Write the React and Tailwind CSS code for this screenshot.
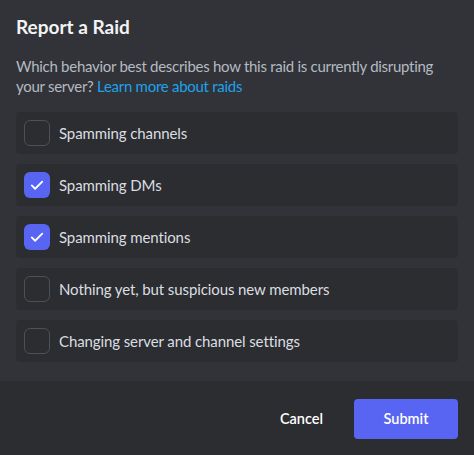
import React from "react";

const options = [
  { label: "Spamming channels", checked: false },
  { label: "Spamming DMs", checked: true },
  { label: "Spamming mentions", checked: true },
  { label: "Nothing yet, but suspicious new members", checked: false },
  { label: "Changing server and channel settings", checked: false },
];

function Check({ checked }) {
  if (checked) {
    return (
      <div className="w-[26px] h-[26px] rounded-[6px] bg-[#5865f2] flex items-center justify-center shrink-0">
        <svg width="18" height="18" viewBox="0 0 24 24" fill="none">
          <path d="M5 12.5l4.5 4.5L19 7.5" stroke="#ffffff" strokeWidth="2.4" strokeLinecap="round" strokeLinejoin="round" />
        </svg>
      </div>
    );
  }
  return <div className="w-[26px] h-[26px] rounded-[6px] border-[1.5px] border-[#4e5058] shrink-0" />;
}

export default function App() {
  return (
    <div className="w-[474px] h-[455px] bg-[#313338] flex flex-col" style={{ fontFamily: 'Lato, "Noto Sans", sans-serif' }}>
      <div className="px-4 pt-[12px] flex-1">
        <h1 className="text-[19px] font-bold text-[#f2f3f5] leading-[30px]">Report a Raid</h1>
        <p className="mt-[14px] text-[15px] leading-[20px] tracking-[-0.28px] text-[#b5bac1]">
          Which behavior best describes how this raid is currently disrupting your server?{" "}
          <span className="text-[#1ea2ec]">Learn more about raids</span>
        </p>
        <div className="mt-[16px] flex flex-col gap-[10px]">
          {options.map((o) => (
            <div key={o.label} className="h-[42px] rounded-[4px] bg-[#2b2d31] flex items-center pl-[8px] pr-[8px] gap-[9px]">
              <Check checked={o.checked} />
              <span className="text-[15px] text-[#dbdee1] tracking-[-0.1px]">{o.label}</span>
            </div>
          ))}
        </div>
      </div>
      <div className="h-[74px] bg-[#2b2d31] flex items-center justify-end gap-[31px] px-4 pt-[2px]">
        <button className="text-[14.5px] font-semibold text-[#ffffff]">Cancel</button>
        <button className="w-[104px] h-[40px] rounded-[4px] bg-[#5865f2] text-[14.5px] font-semibold text-white">Submit</button>
      </div>
    </div>
  );
}
